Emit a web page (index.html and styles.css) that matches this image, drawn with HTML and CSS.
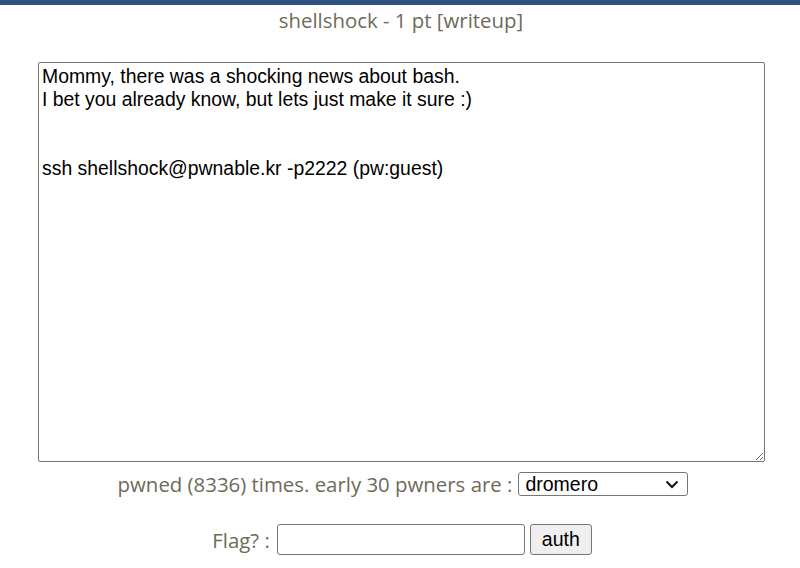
FILE: index.html
```html
<!DOCTYPE html>
<html>
<head>
<meta charset="utf-8">
<link rel="stylesheet" href="styles.css">
</head>
<body>
<div class="topbar"></div>
<div class="title">shellshock - 1 pt [writeup]</div>
<div class="descwrap">
<textarea class="desc">Mommy, there was a shocking news about bash.
I bet you already know, but lets just make it sure :)


ssh shellshock@pwnable.kr -p2222 (pw:guest)</textarea>
</div>
<div class="pwned">pwned (8336) times. early 30 pwners are : <span class="selwrap"><select class="pwners"><option>dromero</option></select><svg class="chev" width="14" height="9" viewBox="0 0 14 9"><path d="M1.5 1.5 L7 7 L12.5 1.5" fill="none" stroke="#111" stroke-width="2"/></svg></span></div>
<div class="flagrow">Flag? : <input class="flag" type="text"> <button class="auth">auth</button></div>
</body>
</html>
```
FILE: styles.css
```css
html, body {
  margin: 0;
  padding: 0;
  background: #fff;
}
body {
  font-family: "Open Sans", sans-serif;
  color: #6e6a58;
  text-align: center;
}
.topbar {
  height: 5px;
  background: #2e5282;
}
.title {
  font-size: 20.4px;
  line-height: 28px;
  padding-top: 1px;
  padding-left: 2px;
  height: 28px;
  margin-bottom: 28px;
}
.descwrap {
  display: flex;
  justify-content: flex-start;
  padding-left: 38px;
}
.desc {
  box-sizing: border-box;
  width: 727px;
  height: 400px;
  margin: 0;
  padding: 2px 3px;
  border: 1px solid #767676;
  border-radius: 2px;
  font-family: "Liberation Sans", Arial, sans-serif;
  font-size: 19.4px;
  line-height: 23px;
  color: #000;
  resize: both;
  display: block;
}
.pwned {
  font-size: 20.4px;
  margin-top: 9px;
  height: 26px;
  display: flex;
  justify-content: center;
  align-items: center;
  gap: 6px;
  padding-left: 6px;
}
.selwrap {
  position: relative;
  display: block;
  width: 170px;
  height: 24px;
}
.pwners {
  box-sizing: border-box;
  -webkit-appearance: none;
  appearance: none;
  width: 170px;
  height: 24px;
  padding: 0 0 0 6px;
  font-family: "Liberation Sans", Arial, sans-serif;
  font-size: 19.5px;
  color: #000;
  border: 1px solid #767676;
  border-radius: 3px;
  background: #fff;
  display: block;
}
.chev {
  position: absolute;
  right: 9px;
  top: 8px;
  pointer-events: none;
}
.flagrow {
  font-size: 20.4px;
  margin-top: 27px;
  padding-left: 4px;
  display: flex;
  justify-content: center;
  align-items: center;
  gap: 7px;
}
.flag {
  box-sizing: border-box;
  width: 248px;
  height: 31px;
  border: 1px solid #767676;
  border-radius: 3px;
  margin: 0;
  font-size: 18px;
}
.auth {
  box-sizing: border-box;
  width: 62px;
  height: 31px;
  margin: 0 0 0 -2px;
  border: 1px solid #767676;
  border-radius: 3px;
  background: #efefef;
  font-family: "Liberation Sans", Arial, sans-serif;
  font-size: 19.5px;
  color: #000;
}
```
